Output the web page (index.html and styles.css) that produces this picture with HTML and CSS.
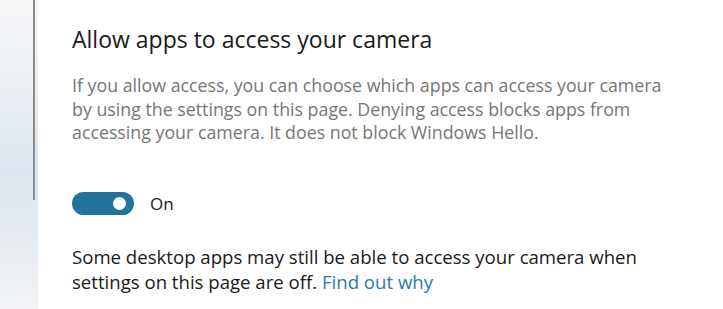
FILE: index.html
```html
<!DOCTYPE html>
<html lang="en">
<head>
<meta charset="utf-8">
<title>Camera</title>
<link rel="stylesheet" href="styles.css">
</head>
<body>
<div class="page">
  <aside class="sidebar"><div class="scrollbar"></div></aside>
  <main class="content">
    <h1 class="title">Allow apps to access your camera</h1>
    <p class="desc">If you allow access, you can choose which apps can access your camera by using the settings on this page. Denying access blocks apps from accessing your camera. It does not block Windows Hello.</p>
    <div class="toggle-row">
      <span class="toggle"><span class="knob"></span></span>
      <span class="toggle-label">On</span>
    </div>
    <p class="note">Some desktop apps may still be able to access your camera when settings on this page are off. <a class="link" href="#">Find out why</a></p>
  </main>
</div>
</body>
</html>
```

FILE: styles.css
```css
html, body {
  margin: 0;
  padding: 0;
  background: #ffffff;
}
body {
  font-family: "Open Sans", "Noto Sans", sans-serif;
  width: 723px;
  height: 309px;
  overflow: hidden;
}
.page {
  display: flex;
  height: 309px;
}
.sidebar {
  width: 38px;
  flex: none;
  background: linear-gradient(to bottom, #f7f8f9 0%, #e9eef3 30%, #dde6ee 55%, #e4eaf0 75%, #f2f4f6 100%);
  display: flex;
  justify-content: flex-end;
  padding-right: 3px;
  box-sizing: border-box;
}
.scrollbar {
  width: 2px;
  height: 200px;
  background: #8c8c8c;
}
.content {
  padding-left: 34px;
  padding-top: 0;
}
.title {
  margin: 23px 0 0;
  font-size: 23px;
  font-weight: 400;
  line-height: 32px;
  color: #1a1a1a;
}
.desc {
  margin: 19px 0 0;
  font-size: 17.8px;
  line-height: 23.5px;
  color: #767676;
  width: 598px;
}
.toggle-row {
  display: flex;
  align-items: center;
  margin-top: 47px;
  gap: 16px;
  height: 23px;
}
.toggle {
  width: 62px;
  height: 23px;
  border-radius: 12px;
  background: #24739b;
  display: flex;
  align-items: center;
  justify-content: flex-end;
  padding-right: 8px;
  box-sizing: border-box;
}
.knob {
  width: 13px;
  height: 13px;
  border-radius: 50%;
  background: #ffffff;
}
.toggle-label {
  font-size: 17px;
  line-height: 23px;
  color: #1a1a1a;
}
.note {
  margin: 29px 0 0;
  font-size: 18.6px;
  line-height: 25px;
  color: #1a1a1a;
  width: 610px;
}
.link {
  color: #2b7bac;
  text-decoration: none;
}
```
